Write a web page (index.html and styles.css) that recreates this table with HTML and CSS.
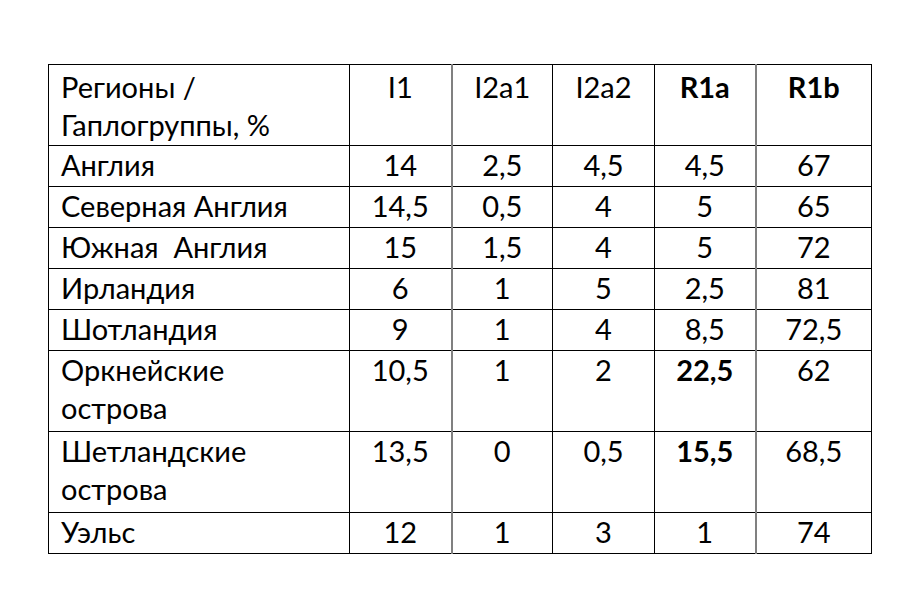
FILE: index.html
```html
<!DOCTYPE html>
<html lang="ru">
<head>
<meta charset="utf-8">
<link rel="stylesheet" href="styles.css">
</head>
<body>
<table class="hg">
  <colgroup>
    <col class="w301">
    <col class="w102">
    <col class="w101">
    <col class="w102">
    <col class="w101">
    <col class="w116">
  </colgroup>
  <tr class="head">
    <td class="region">Регионы /<br>Гаплогруппы, %</td>
    <td>I1</td>
    <td class="gray">I2a1</td>
    <td>I2a2</td>
    <td class="b">R1a</td>
    <td class="gray b">R1b</td>
  </tr>
  <tr><td class="region">Англия</td><td>14</td><td class="gray">2,5</td><td>4,5</td><td>4,5</td><td class="gray">67</td></tr>
  <tr><td class="region">Северная Англия</td><td>14,5</td><td class="gray">0,5</td><td>4</td><td>5</td><td class="gray">65</td></tr>
  <tr><td class="region">Южная&nbsp; Англия</td><td>15</td><td class="gray">1,5</td><td>4</td><td>5</td><td class="gray">72</td></tr>
  <tr><td class="region">Ирландия</td><td>6</td><td class="gray">1</td><td>5</td><td>2,5</td><td class="gray">81</td></tr>
  <tr><td class="region">Шотландия</td><td>9</td><td class="gray">1</td><td>4</td><td>8,5</td><td class="gray">72,5</td></tr>
  <tr class="tall"><td class="region">Оркнейские<br>острова</td><td>10,5</td><td class="gray">1</td><td>2</td><td class="b">22,5</td><td class="gray">62</td></tr>
  <tr class="tall"><td class="region">Шетландские<br>острова</td><td>13,5</td><td class="gray">0</td><td>0,5</td><td class="b">15,5</td><td class="gray">68,5</td></tr>
  <tr><td class="region">Уэльс</td><td>12</td><td class="gray">1</td><td>3</td><td>1</td><td class="gray">74</td></tr>
</table>
</body>
</html>
```

FILE: styles.css
```css
html, body {
  margin: 0;
  padding: 0;
  background: #ffffff;
}

body {
  padding: 64px 0 0 48px;
  font-family: Lato, "Liberation Sans", sans-serif;
  color: #000000;
}

.hg {
  border-collapse: collapse;
  table-layout: fixed;
  width: 823px;
  font-size: 29px;
}

.w301 { width: 301px; }
.w102 { width: 102px; }
.w101 { width: 101px; }
.w116 { width: 116px; }

.hg td {
  border: 1px solid #000000;
  padding: 0;
  line-height: 38px;
  height: 40px;
  vertical-align: top;
  text-align: center;
  white-space: nowrap;
}

.hg td.region {
  text-align: left;
  padding-left: 12px;
}

.hg td.gray {
  border-left: 2px solid #808080;
}

.hg td.b {
  font-weight: 700;
}

.hg tr.head td {
  padding-top: 3px;
  height: 77px;
}

.hg tr.tall td {
  height: 80px;
}
```
